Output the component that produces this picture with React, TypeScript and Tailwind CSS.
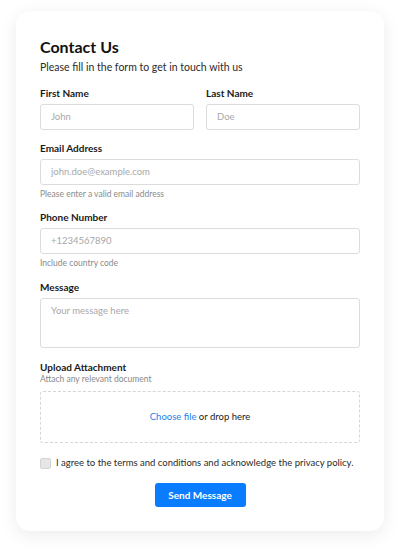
import React, { useState } from 'react';

const font = { fontFamily: 'Lato, "Open Sans", sans-serif' };

const inputClass =
  'block w-full rounded-[3px] border border-[#dcdcdc] bg-white px-2.5 py-1 text-[9.5px] leading-4 text-[#222] placeholder-[#a8a8a8] outline-none';

const Label: React.FC<{ htmlFor: string; children: React.ReactNode }> = ({ htmlFor, children }) => (
  <label htmlFor={htmlFor} className="mb-1 block text-[10px] font-bold leading-[14px] text-[#1a1a1a]">
    {children}
  </label>
);

const Help: React.FC<{ children: React.ReactNode }> = ({ children }) => (
  <p className="mt-[3px] text-[8.5px] leading-[12px] text-[#8a8a8a]">{children}</p>
);

const App: React.FC = () => {
  const [agree, setAgree] = useState(false);

  return (
    <div className="min-h-screen bg-white pt-[11px]" style={font}>
      <div className="mx-4 rounded-[14px] bg-white px-6 pb-6 pt-6 shadow-[0_4px_18px_rgba(0,0,0,0.08)]">
        <h1 className="text-[16px] font-bold leading-6 text-[#111]">Contact Us</h1>
        <p className="text-[10.5px] leading-4 text-[#2a2a2a]">Please fill in the form to get in touch with us</p>

        <form onSubmit={(e) => e.preventDefault()}>
          <div className="mt-[11px] grid grid-cols-2 gap-3">
            <div>
              <Label htmlFor="first">First Name</Label>
              <input id="first" className={inputClass} placeholder="John" />
            </div>
            <div>
              <Label htmlFor="last">Last Name</Label>
              <input id="last" className={inputClass} placeholder="Doe" />
            </div>
          </div>

          <div className="mt-[11px]">
            <Label htmlFor="email">Email Address</Label>
            <input id="email" type="email" className={inputClass} placeholder="john.doe@example.com" />
            <Help>Please enter a valid email address</Help>
          </div>

          <div className="mt-[10px]">
            <Label htmlFor="phone">Phone Number</Label>
            <input id="phone" type="tel" className={inputClass} placeholder="+1234567890" />
            <Help>Include country code</Help>
          </div>

          <div className="mt-[11px]">
            <Label htmlFor="message">Message</Label>
            <textarea
              id="message"
              className={`${inputClass} h-[50px] resize-none`}
              placeholder="Your message here"
            />
          </div>

          <div className="mt-3">
            <p className="text-[10px] font-bold leading-[14px] text-[#1a1a1a]">Upload Attachment</p>
            <p className="text-[8.5px] leading-[11px] text-[#8a8a8a]">Attach any relevant document</p>
            <label className="mt-[6px] flex h-[52px] cursor-pointer items-center justify-center rounded-[3px] border border-dashed border-[#d6d6d6] text-[9.5px] text-[#222]">
              <input type="file" className="hidden" />
              <span className="text-[#1a82f0]">Choose file</span>
              <span>&nbsp;or drop here</span>
            </label>
          </div>

          <label className="mt-3 flex items-center gap-[5px] whitespace-nowrap text-[9.5px] leading-4 text-[#2a2a2a]">
            <input
              type="checkbox"
              checked={agree}
              onChange={(e) => setAgree(e.target.checked)}
              className="h-[11px] w-[11px] shrink-0 appearance-none rounded-[2px] border border-[#d4d4d4] bg-[#e6e6e6] checked:bg-[#007bff]"
            />
            I agree to the terms and conditions and acknowledge the privacy policy.
          </label>

          <div className="mt-3 flex justify-center">
            <button
              type="submit"
              className="h-6 w-[91px] rounded-[3px] bg-[#0a7cff] text-[10px] font-bold text-white"
            >
              Send Message
            </button>
          </div>
        </form>
      </div>
    </div>
  );
};

export default App;
